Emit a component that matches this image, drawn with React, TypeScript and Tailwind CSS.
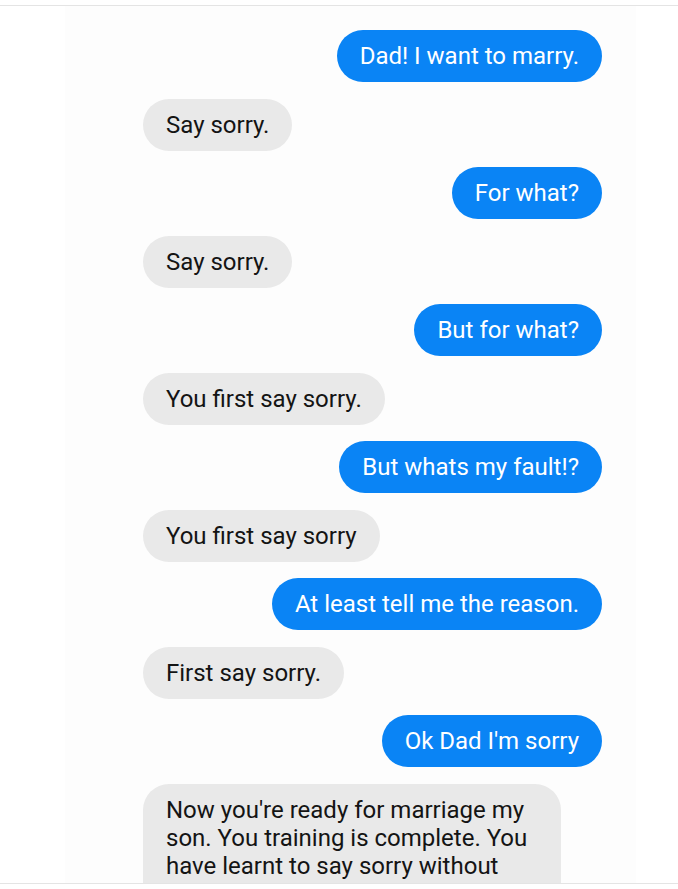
const messages: { from: "me" | "dad"; text: string }[] = [
  { from: "me", text: "Dad! I want to marry." },
  { from: "dad", text: "Say sorry." },
  { from: "me", text: "For what?" },
  { from: "dad", text: "Say sorry." },
  { from: "me", text: "But for what?" },
  { from: "dad", text: "You first say sorry." },
  { from: "me", text: "But whats my fault!?" },
  { from: "dad", text: "You first say sorry" },
  { from: "me", text: "At least tell me the reason." },
  { from: "dad", text: "First say sorry." },
  { from: "me", text: "Ok Dad I'm sorry" },
  {
    from: "dad",
    text: "Now you're ready for marriage my son. You training is complete. You have learnt to say sorry without knowing your fault.",
  },
];

function Bubble({ from, text }: { from: "me" | "dad"; text: string }) {
  const mine = from === "me";
  return (
    <div className={mine ? "flex justify-end" : "flex justify-start"}>
      <div
        className={
          mine
            ? "max-w-[418px] rounded-[26px] bg-[#0a84f5] px-[23px] py-3 text-[24px] leading-7 text-white"
            : "max-w-[418px] rounded-[26px] bg-[#e9e9e9] px-[23px] py-3 text-[24px] leading-7 text-[#141414]"
        }
      >
        {text}
      </div>
    </div>
  );
}

export default function App() {
  return (
    <div className="h-[889px] w-[678px] overflow-hidden bg-white pt-[5px] font-['Roboto',sans-serif]">
      <div className="h-[879px] overflow-hidden border-y border-[#e4e4e4]">
        <div className="ml-[65px] h-full w-[571px] bg-[#fdfdfd]">
          <div className="flex flex-col gap-[16.5px] pb-6 pl-[78px] pr-[34px] pt-6">
            {messages.map((m, i) => (
              <Bubble key={i} from={m.from} text={m.text} />
            ))}
          </div>
        </div>
      </div>
    </div>
  );
}
